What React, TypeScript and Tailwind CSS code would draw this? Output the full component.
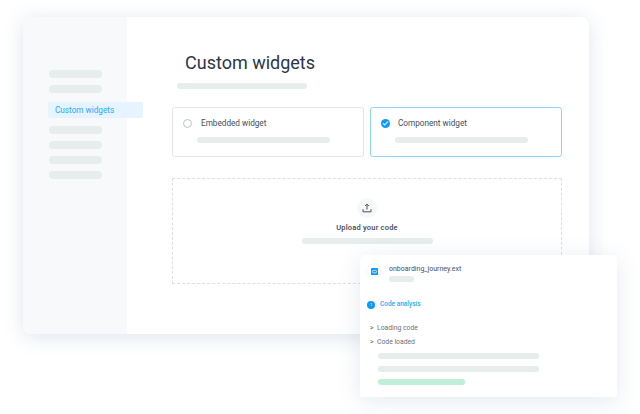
import React from 'react';
import { Check } from 'lucide-react';

const Bar = ({ className }: { className: string }) => (
  <div className={`rounded-full bg-[#e6edeb] ${className}`} />
);

const UploadIcon = () => (
  <svg width="10" height="10" viewBox="0 0 10 10" fill="none" stroke="#4a5260" strokeWidth="1">
    <path d="M5 6.5V1.2M3.1 3 5 1.1 6.9 3" />
    <path d="M1 6.2v2.6h8V6.2" />
  </svg>
);

const SideNav = () => (
  <div className="w-[104px] h-full shrink-0 bg-[#f7f9fb] rounded-l-[8px] pt-[53px]">
    <div className="flex flex-col gap-[7px] pl-[26px]">
      <Bar className="w-[53px] h-[8px]" />
      <Bar className="w-[53px] h-[8px]" />
    </div>
    <div className="ml-[25px] mt-[9px] w-[95px] h-[16px] pl-[7px] rounded-[2px] bg-[#e5f4fe] text-[#2aa8fb] text-[8.2px] leading-[16px]">
      Custom widgets
    </div>
    <div className="flex flex-col gap-[7px] pl-[26px] mt-[8px]">
      <Bar className="w-[53px] h-[8px]" />
      <Bar className="w-[53px] h-[8px]" />
      <Bar className="w-[53px] h-[8px]" />
      <Bar className="w-[53px] h-[8px]" />
    </div>
  </div>
);

const OptionCard = ({ label, selected }: { label: string; selected?: boolean }) => (
  <div className={`w-[192px] h-[50px] rounded-[3px] border ${selected ? 'border-[#8fd4fe]' : 'border-[#e1e6ec]'}`}>
    <div className="flex items-center h-[15px] mt-[8px]">
      {selected ? (
        <div className="ml-[10px] w-[9px] h-[9px] rounded-full bg-[#0d9bfb] flex items-center justify-center">
          <Check size={7} color="#ffffff" strokeWidth={3.5} />
        </div>
      ) : (
        <div className="ml-[10px] w-[9px] h-[9px] rounded-full border border-[#b9c3d0]" />
      )}
      <span className={`${selected ? 'ml-[8px]' : 'ml-[9px]'} text-[8.2px] text-[#454c59]`}>{label}</span>
    </div>
    <Bar className="w-[133px] h-[6px] ml-[24px] mt-[6px]" />
  </div>
);

const UploadBox = () => (
  <div className="mt-[21px] w-[390px] h-[106px] border border-dashed border-[#dcdfe5] flex flex-col items-center pt-[19px]">
    <div className="w-[20px] h-[20px] rounded-full bg-[#f6f7f9] flex items-center justify-center">
      <UploadIcon />
    </div>
    <div className="mt-[4px] text-[7.5px] leading-[12px] font-medium text-[#3f4653] tracking-[0.2px]">Upload your code</div>
    <Bar className="w-[131px] h-[6px] mt-[4px]" />
  </div>
);

const AnalysisCard = () => (
  <div className="absolute left-[360px] top-[255px] w-[257px] h-[142px] bg-white rounded-t-[6px] rounded-b-[2px] shadow-[0_4px_22px_rgba(90,120,160,0.16)]">
    <div className="flex pl-[6px] pt-[8px]">
      <div className="w-[16px] h-[16px] rounded-full border border-[#f6f8fa] flex items-center justify-center">
        <svg width="7" height="7" viewBox="0 0 7 7">
          <rect width="7" height="7" rx="0.6" fill="#0d9bfb" />
          <rect x="1.5" y="2.4" width="4" height="2.4" rx="1" fill="none" stroke="#ffffff" strokeWidth="0.7" />
        </svg>
      </div>
      <div className="ml-[7px]">
        <div className="text-[7px] leading-[10px] text-[#4a505c] mt-[1px]">onboarding_journey.ext</div>
        <Bar className="w-[25px] h-[6px] mt-[2px]" />
      </div>
    </div>
    <div className="flex items-center mt-[18px] pl-[7px]">
      <div className="w-[8px] h-[8px] rounded-full bg-[#0d9bfb] flex items-center justify-center text-white text-[4px] leading-none">1</div>
      <span className="ml-[5px] text-[6.5px] font-medium text-[#2aa8fb]">Code analysis</span>
    </div>
    <div className="mt-[13px] pl-[10px] text-[6.8px] leading-[10px] text-[#6a707b]">
      <div className="flex">
        <span className="w-[7px] text-[#555b66]">&gt;</span>
        <span>Loading code</span>
      </div>
      <div className="flex mt-[4px]">
        <span className="w-[7px] text-[#555b66]">&gt;</span>
        <span>Code loaded</span>
      </div>
    </div>
    <div className="flex flex-col gap-[7px] pl-[18px] mt-[6px]">
      <Bar className="w-[161px] h-[6px]" />
      <Bar className="w-[161px] h-[6px]" />
      <div className="w-[87px] h-[6px] rounded-full bg-[#c0eed8]" />
    </div>
  </div>
);

export default function App() {
  return (
    <div className="relative w-[640px] h-[414px] overflow-hidden bg-white font-['Roboto',sans-serif]">
      <div className="ml-[23px] translate-y-[17px] w-[566px] h-[317px] flex bg-white rounded-[8px] shadow-[0_3px_20px_rgba(90,120,160,0.2)]">
        <SideNav />
        <div className="pl-[45px]">
          <h1 className="ml-[13px] mt-[32px] h-[28px] text-[18px] leading-[28px] font-normal text-[#2b3648]">
            Custom widgets
          </h1>
          <Bar className="ml-[5px] mt-[6px] w-[130px] h-[6px]" />
          <div className="flex gap-[6px] mt-[18px]">
            <OptionCard label="Embedded widget" />
            <OptionCard label="Component widget" selected />
          </div>
          <UploadBox />
        </div>
      </div>
      <AnalysisCard />
    </div>
  );
}
